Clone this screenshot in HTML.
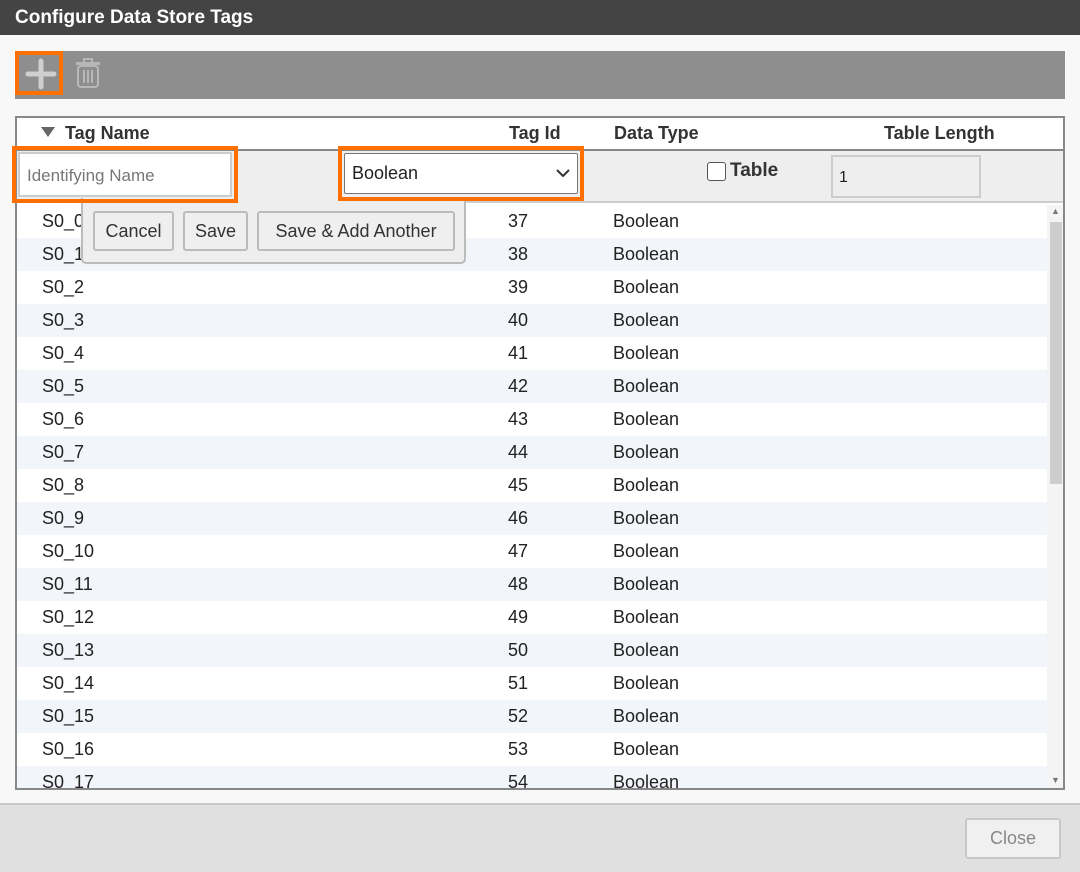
<!DOCTYPE html>
<html><head><style>
*{box-sizing:border-box;margin:0;padding:0}
body{width:1080px;height:872px;background:#f8f8f8;font-family:"Liberation Sans",sans-serif;position:relative;overflow:hidden;color:#222}
.abs{position:absolute}
.title{left:0;top:0;width:1080px;height:35px;background:#444;color:#fff;font-weight:bold;font-size:19px;padding:7px 15px}
.tb{left:15px;top:51px;width:1050px;height:48px;background:#8e8e8e}
.box{left:15px;top:116px;width:1050px;height:674px;border:2px solid #888;background:#fff;overflow:hidden}
.hdr{left:0;top:0;width:1048px;height:33px;border-bottom:2px solid #888;font-weight:bold;font-size:18px;color:#333}
.filt{left:0;top:33px;width:1048px;height:52px;background:#eee;border-bottom:2px solid #ccc}
.row{position:absolute;left:0;width:1030px;height:33px;font-size:18px;line-height:33px}
.row span{position:absolute}
.btn{position:absolute;top:95px;height:40px;border:2px solid #bbb;border-radius:3px;background:#efefef;font-size:18px;line-height:36px;text-align:center;color:#333}
</style></head><body>
<div class="abs title">Configure Data Store Tags</div>
<div class="abs tb"></div>
<div class="abs" style="left:15px;top:51px;width:48px;height:44px;border:4px solid #ff7000"></div>
<svg class="abs" style="left:25px;top:58px" width="32" height="32"><path d="M16 3V29M3 16H29" stroke="#cfcfcf" stroke-width="5" stroke-linecap="round"/></svg>
<svg class="abs" style="left:74px;top:57px" width="28" height="32"><rect x="2" y="5" width="24" height="3" fill="#b8b8b8"/><rect x="10" y="2" width="8" height="4" fill="none" stroke="#b8b8b8" stroke-width="2"/><rect x="4" y="9" width="20" height="21" rx="3" fill="none" stroke="#b8b8b8" stroke-width="2"/><path d="M10 13V26M14 13V26M18 13V26" stroke="#b8b8b8" stroke-width="2"/></svg>
<div class="abs box">
<div class="abs hdr">
<svg class="abs" style="left:24px;top:9px" width="14" height="11"><path d="M0 0H14L7 10Z" fill="#666"/></svg>
<span class="abs" style="left:48px;top:5px">Tag Name</span>
<span class="abs" style="left:492px;top:5px">Tag Id</span>
<span class="abs" style="left:597px;top:5px">Data Type</span>
<span class="abs" style="left:867px;top:5px">Table Length</span>
</div>
<div class="abs filt">
<span class="abs" style="left:690px;top:11px;width:19px;height:19px;border:1px solid #555;border-radius:3px;background:#fff"></span>
<span class="abs" style="left:713px;top:9px;font-weight:bold;font-size:19px;color:#333">Table</span>
<div class="abs" style="left:814px;top:4px;width:150px;height:43px;border:2px solid #ccc;background:#eee;font-size:16px;padding:12px 6px">1</div>
</div>
<div class="abs" style="left:0;top:87px;width:1048px;height:600px">
<div class="row" style="top:0"><span style="left:25px">S0_0</span><span style="left:491px">37</span><span style="left:596px">Boolean</span></div>
<div class="row" style="top:33px;background:#f2f5fa"><span style="left:25px">S0_1</span><span style="left:491px">38</span><span style="left:596px">Boolean</span></div>
<div class="row" style="top:66px"><span style="left:25px">S0_2</span><span style="left:491px">39</span><span style="left:596px">Boolean</span></div>
<div class="row" style="top:99px;background:#f2f5fa"><span style="left:25px">S0_3</span><span style="left:491px">40</span><span style="left:596px">Boolean</span></div>
<div class="row" style="top:132px"><span style="left:25px">S0_4</span><span style="left:491px">41</span><span style="left:596px">Boolean</span></div>
<div class="row" style="top:165px;background:#f2f5fa"><span style="left:25px">S0_5</span><span style="left:491px">42</span><span style="left:596px">Boolean</span></div>
<div class="row" style="top:198px"><span style="left:25px">S0_6</span><span style="left:491px">43</span><span style="left:596px">Boolean</span></div>
<div class="row" style="top:231px;background:#f2f5fa"><span style="left:25px">S0_7</span><span style="left:491px">44</span><span style="left:596px">Boolean</span></div>
<div class="row" style="top:264px"><span style="left:25px">S0_8</span><span style="left:491px">45</span><span style="left:596px">Boolean</span></div>
<div class="row" style="top:297px;background:#f2f5fa"><span style="left:25px">S0_9</span><span style="left:491px">46</span><span style="left:596px">Boolean</span></div>
<div class="row" style="top:330px"><span style="left:25px">S0_10</span><span style="left:491px">47</span><span style="left:596px">Boolean</span></div>
<div class="row" style="top:363px;background:#f2f5fa"><span style="left:25px">S0_11</span><span style="left:491px">48</span><span style="left:596px">Boolean</span></div>
<div class="row" style="top:396px"><span style="left:25px">S0_12</span><span style="left:491px">49</span><span style="left:596px">Boolean</span></div>
<div class="row" style="top:429px;background:#f2f5fa"><span style="left:25px">S0_13</span><span style="left:491px">50</span><span style="left:596px">Boolean</span></div>
<div class="row" style="top:462px"><span style="left:25px">S0_14</span><span style="left:491px">51</span><span style="left:596px">Boolean</span></div>
<div class="row" style="top:495px;background:#f2f5fa"><span style="left:25px">S0_15</span><span style="left:491px">52</span><span style="left:596px">Boolean</span></div>
<div class="row" style="top:528px"><span style="left:25px">S0_16</span><span style="left:491px">53</span><span style="left:596px">Boolean</span></div>
<div class="row" style="top:561px;background:#f2f5fa"><span style="left:25px">S0_17</span><span style="left:491px">54</span><span style="left:596px">Boolean</span></div>
</div>
<div class="abs" style="left:1030px;top:87px;width:18px;height:586px;background:#f4f4f4"></div>
<div class="abs" style="left:1033px;top:104px;width:12px;height:262px;background:#cdcdcd"></div>
<span class="abs" style="left:1034px;top:88px;font-size:9px;color:#777">▲</span>
<span class="abs" style="left:1034px;top:657px;font-size:9px;color:#777">▼</span>
</div>
<div class="abs" style="left:81px;top:198px;width:385px;height:66px;background:#eee;border:2px solid #bbb;border-top:none;border-radius:0 0 5px 5px"></div>
<div class="btn" style="left:93px;top:211px;width:81px">Cancel</div>
<div class="btn" style="left:183px;top:211px;width:65px">Save</div>
<div class="btn" style="left:257px;top:211px;width:198px">Save &amp; Add Another</div>
<div class="abs" style="left:12px;top:146px;width:226px;height:57px;border:4px solid #ff7000"></div>
<div class="abs" style="left:18px;top:152px;width:214px;height:45px;border:2px solid #ccc;background:#fff;font-size:17px;color:#777;padding:12px 7px">Identifying Name</div>
<div class="abs" style="left:338px;top:146px;width:246px;height:55px;border:4px solid #ff7000"></div>
<div class="abs" style="left:344px;top:153px;width:234px;height:41px;border:1px solid #777;border-radius:2px;background:#fff;font-size:18px;color:#222;padding:9px 7px">Boolean
<svg class="abs" style="left:211px;top:14px" width="14" height="10"><path d="M1 2L7 8L13 2" fill="none" stroke="#333" stroke-width="2"/></svg></div>
<div class="abs" style="left:0;top:803px;width:1080px;height:69px;background:#e0e0e0;border-top:2px solid #c8c8c8"></div>
<div class="abs" style="left:965px;top:818px;width:96px;height:41px;border:2px solid #c8c8c8;border-radius:3px;background:#f0f0f0;color:#888;font-size:18px;text-align:center;line-height:37px">Close</div>
</body></html>
